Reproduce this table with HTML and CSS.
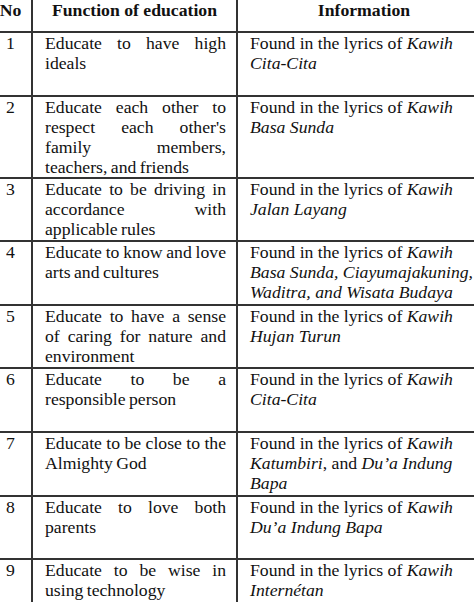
FILE: index.html
```html
<!DOCTYPE html>
<html lang="en">
<head>
<meta charset="utf-8">
<title>Function of education</title>
<link rel="stylesheet" href="styles.css">
</head>
<body>
<table class="edu">
  <colgroup>
    <col class="c-no">
    <col class="c-fn">
    <col class="c-info">
  </colgroup>
  <thead>
    <tr>
      <th class="no">No</th>
      <th class="fn-h">Function of education</th>
      <th class="info-h">Information</th>
    </tr>
  </thead>
  <tbody>
    <tr>
      <td class="no">1</td>
      <td class="fn">Educate to have high ideals</td>
      <td class="info">Found in the lyrics of <i>Kawih Cita-Cita</i></td>
    </tr>
    <tr>
      <td class="no">2</td>
      <td class="fn">Educate each other to respect each other's family members, teachers, and friends</td>
      <td class="info">Found in the lyrics of <i>Kawih Basa Sunda</i></td>
    </tr>
    <tr>
      <td class="no">3</td>
      <td class="fn">Educate to be driving in accordance with applicable rules</td>
      <td class="info">Found in the lyrics of <i>Kawih Jalan Layang</i></td>
    </tr>
    <tr>
      <td class="no">4</td>
      <td class="fn">Educate to know and love arts and cultures</td>
      <td class="info">Found in the lyrics of <i>Kawih Basa Sunda, Ciayumajakuning, Waditra, and Wisata Budaya</i></td>
    </tr>
    <tr>
      <td class="no">5</td>
      <td class="fn">Educate to have a sense of caring for nature and environment</td>
      <td class="info">Found in the lyrics of <i>Kawih Hujan Turun</i></td>
    </tr>
    <tr>
      <td class="no">6</td>
      <td class="fn">Educate to be a responsible person</td>
      <td class="info">Found in the lyrics of <i>Kawih Cita-Cita</i></td>
    </tr>
    <tr>
      <td class="no">7</td>
      <td class="fn">Educate to be close to the Almighty God</td>
      <td class="info">Found in the lyrics of <i>Kawih Katumbiri</i>, and <i>Du’a Indung Bapa</i></td>
    </tr>
    <tr>
      <td class="no">8</td>
      <td class="fn">Educate to love both parents</td>
      <td class="info">Found in the lyrics of <i>Kawih Du’a Indung Bapa</i></td>
    </tr>
    <tr>
      <td class="no">9</td>
      <td class="fn">Educate to be wise in using technology</td>
      <td class="info">Found in the lyrics of <i>Kawih Internétan</i></td>
    </tr>
  </tbody>
</table>
</body>
</html>
```
FILE: styles.css
```css
html, body {
  margin: 0;
  padding: 0;
  background: #ffffff;
  overflow: hidden;
}

body {
  width: 474px;
  height: 602px;
}

.edu {
  border-collapse: collapse;
  table-layout: fixed;
  width: 502px;
  margin: -2px 0 0 -12px;
  font-family: "Liberation Serif", "Times New Roman", serif;
  font-size: 17.7px;
  line-height: 20px;
  color: #111111;
}

.c-no { width: 43px; }
.c-fn { width: 205px; }
.c-info { width: 254px; }

.edu th,
.edu td {
  border: 2px solid #333333;
  vertical-align: top;
}

.edu th {
  font-weight: bold;
  text-align: center;
  padding: 0 11px 11px;
}

.edu th.no {
  padding: 0 0 11px;
}

.edu td {
  padding: 0 10px 0 12px;
  height: 61.6px;
}

.edu td.no {
  text-align: center;
  padding: 0;
}

.edu td.fn {
  text-align: justify;
  word-spacing: -1px;
}

.edu td.info {
  text-align: left;
}
```
